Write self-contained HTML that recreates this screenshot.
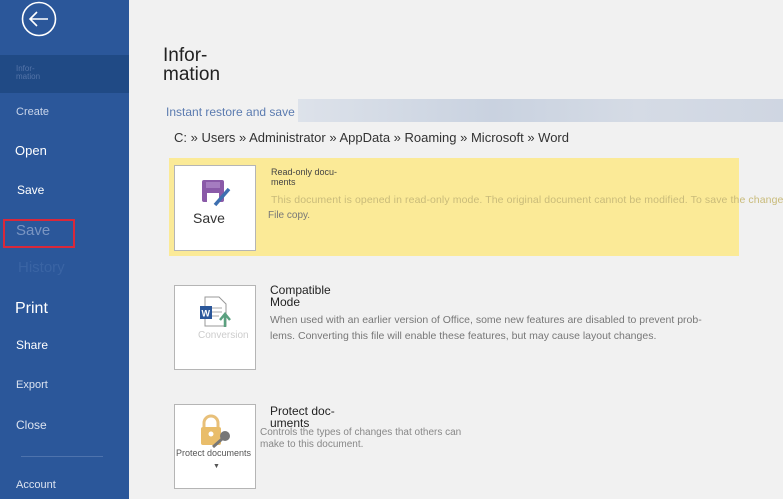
<!DOCTYPE html>
<html><head><style>
*{margin:0;padding:0;box-sizing:border-box}
body{width:783px;height:499px;overflow:hidden;background:#f1f1f1;font-family:"Liberation Sans",sans-serif;position:relative}
.sb{position:absolute;left:0;top:0;width:129px;height:499px;background:#2b579a}
.a{position:absolute;white-space:nowrap}
.sbt{color:#fff;font-size:13px}
.tile{position:absolute;left:174px;width:82px;background:#fff;border:1px solid #b5b5b5}
</style></head><body>
<div class="sb">
 <svg class="a" style="left:21px;top:1px" width="36" height="36" viewBox="0 0 36 36"><circle cx="18" cy="18" r="16.5" fill="none" stroke="#fff" stroke-width="1.6"/><path d="M9 18H27M16 11L9 18L16 25" fill="none" stroke="#fff" stroke-width="1.6"/></svg>
 <div class="a" style="left:0;top:55px;width:129px;height:38px;background:#204a85"></div>
 <div class="a" style="left:16px;top:65px;font-size:8px;line-height:8px;color:#5474a8">Infor-<br>mation</div>
 <div class="a sbt" style="left:16px;top:106px;font-size:11px;color:#c9d5ea">Create</div>
 <div class="a sbt" style="left:15px;top:143px">Open</div>
 <div class="a sbt" style="left:17px;top:183px;font-size:12px">Save</div>
 <div class="a" style="left:3px;top:219px;width:72px;height:29px;border:2px solid #d9283a"></div>
 <div class="a" style="left:16px;top:222px;font-size:15px;color:#7a95c2">Save</div>
 <div class="a" style="left:18px;top:259px;font-size:15px;color:#3a64a4">History</div>
 <div class="a sbt" style="left:15px;top:300px;font-size:16px">Print</div>
 <div class="a sbt" style="left:16px;top:338px;font-size:12px">Share</div>
 <div class="a sbt" style="left:16px;top:379px;font-size:11px;color:#dbe3f0">Export</div>
 <div class="a sbt" style="left:16px;top:418px;font-size:12px;color:#dbe3f0">Close</div>
 <div class="a" style="left:21px;top:456px;width:82px;height:1px;background:#4e73ad"></div>
 <div class="a sbt" style="left:16px;top:479px;font-size:11px;color:#dbe3f0">Account</div>
</div>
<div class="a" style="left:163px;top:46px;font-size:19px;line-height:19px;color:#222">Infor-<br>mation</div>
<div class="a" style="left:298px;top:99px;width:485px;height:23px;background:linear-gradient(90deg,#dde2ea,#c9d2e0 40%,#d5dbe5 70%,#cfd6e2)"></div>
<div class="a" style="left:166px;top:105px;font-size:12px;color:#5b7bb0">Instant restore and save</div>
<div class="a" style="left:174px;top:130px;font-size:13px;color:#333">C: » Users » Administrator » AppData » Roaming » Microsoft » Word</div>
<div class="a" style="left:169px;top:158px;width:570px;height:98px;background:#fbea97"></div>
<div class="tile" style="top:165px;height:86px"></div>
<svg class="a" style="left:202px;top:180px" width="30" height="28" viewBox="0 0 30 28"><rect x="0" y="0" width="22" height="22" rx="2" fill="#8a5aa8"/><rect x="5" y="13" width="12" height="9" fill="#fff"/><rect x="4" y="2" width="14" height="6" fill="#a57cc0"/><path d="M13 25L27 9" stroke="#3d6fb0" stroke-width="3.5"/></svg>
<div class="a" style="left:193px;top:210px;font-size:14px;color:#333">Save</div>
<div class="a" style="left:271px;top:167px;font-size:9px;line-height:10px;color:#444">Read-only docu-<br>ments</div>
<div class="a" style="left:271px;top:194px;font-size:10.5px;color:#c9bb7a;letter-spacing:0.1px">This document is opened in read-only mode. The original document cannot be modified. To save the changes</div>
<div class="a" style="left:268px;top:210px;font-size:10px;color:#777">File copy.</div>
<div class="tile" style="top:285px;height:85px"></div>
<svg class="a" style="left:199px;top:296px" width="34" height="32" viewBox="0 0 34 32"><path d="M6 1H20L27 8V30H6Z" fill="#fff" stroke="#999"/><path d="M12 12H23M12 16H23M12 20H20" stroke="#aaa"/><rect x="1" y="10" width="12" height="13" fill="#2b579a"/><text x="2.5" y="20.5" font-size="9" font-weight="bold" fill="#fff" font-family="Liberation Sans">W</text><path d="M26 31V20M21 24L26 18L31 24" stroke="#5aa07f" stroke-width="2.5" fill="none"/></svg>
<div class="a" style="left:198px;top:330px;font-size:10px;color:#ccc">Conversion</div>
<div class="a" style="left:270px;top:284px;font-size:12px;line-height:12px;color:#222">Compatible<br>Mode</div>
<div class="a" style="left:270px;top:312px;font-size:10.5px;line-height:16px;color:#777">When used with an earlier version of Office, some new features are disabled to prevent prob-<br>lems. Converting this file will enable these features, but may cause layout changes.</div>
<div class="tile" style="top:404px;height:85px"></div>
<svg class="a" style="left:199px;top:414px" width="34" height="34" viewBox="0 0 34 34"><path d="M5 13V9A7 7 0 0 1 19 9V13" fill="none" stroke="#e8c07a" stroke-width="3"/><rect x="2" y="13" width="20" height="18" rx="2" fill="#e9bd6a"/><circle cx="12" cy="20" r="2.5" fill="#fff"/><circle cx="26" cy="22" r="5" fill="#777"/><path d="M23 25L14 33" stroke="#777" stroke-width="3"/></svg>
<div class="a" style="left:176px;top:448px;font-size:9px;color:#555">Protect documents</div>
<div class="a" style="left:213px;top:463px;font-size:7px;color:#555">▼</div>
<div class="a" style="left:270px;top:405px;font-size:12px;line-height:12px;color:#222">Protect doc-<br>uments</div>
<div class="a" style="left:260px;top:427px;font-size:10px;line-height:12px;color:#888">Controls the types of changes that others can<br>make to this document.</div>
</body></html>
